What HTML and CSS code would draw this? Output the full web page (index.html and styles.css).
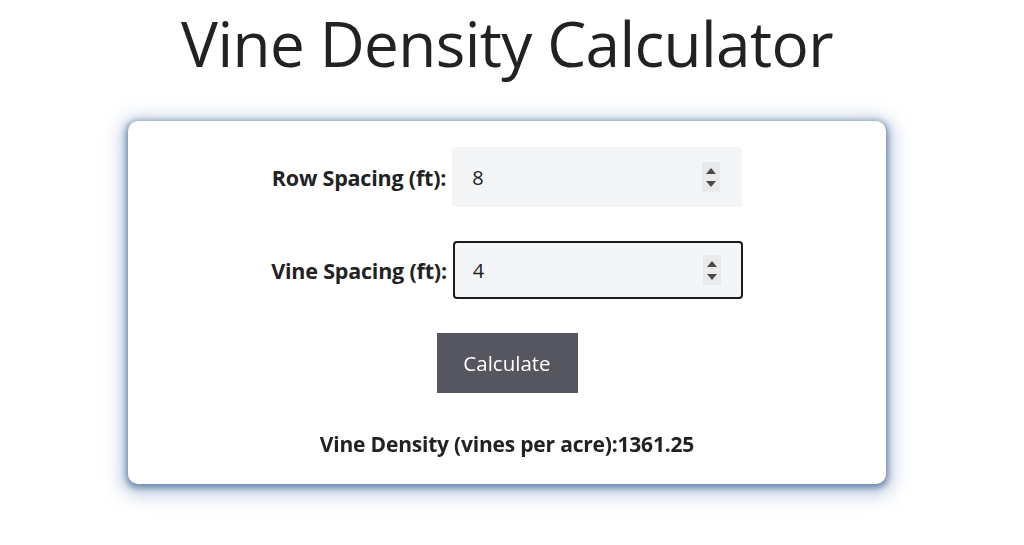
FILE: index.html
```html
<!DOCTYPE html>
<html lang="en">
<head>
    <meta charset="UTF-8">
    <meta name="viewport" content="width=device-width, initial-scale=1.0">
    <title>Vine Density Calculator</title>
    <link rel="stylesheet" href="styles.css">
</head>
<body>

    <h1 class="title">Vine Density Calculator</h1>

    <!-- Calculator card -->
    <div class="card">
        <div class="field">
            <label for="row-spacing">Row Spacing (ft):</label>
            <div class="num-box">
                <input type="number" id="row-spacing" value="8">
                <div class="spin"><span class="up"></span><span class="down"></span></div>
            </div>
        </div>

        <div class="field">
            <label for="vine-spacing">Vine Spacing (ft):</label>
            <div class="num-box active">
                <input type="number" id="vine-spacing" value="4" autofocus>
                <div class="spin"><span class="up"></span><span class="down"></span></div>
            </div>
        </div>

        <button class="btn" onclick="calculate()">Calculate</button>

        <div class="result">Vine Density (vines per acre):<span id="result">1361.25</span></div>
    </div>

    <script>
        function calculate() {
            var row = parseFloat(document.getElementById("row-spacing").value);
            var vine = parseFloat(document.getElementById("vine-spacing").value);
            if (!row || !vine) {
                document.getElementById("result").textContent = "";
                return;
            }
            document.getElementById("result").textContent = (43560 / (row * vine)).toFixed(2);
        }
    </script>

</body>
</html>
```

FILE: styles.css
```css
body {
    font-family: "Open Sans", "Noto Sans", Arial, sans-serif;
    background-color: #ffffff;
    color: #222;
    margin: 0;
    padding: 0 10px 50px 0;
}
.title {
    text-align: center;
    font-size: 62px;
    letter-spacing: -0.6px;
    font-weight: 400;
    margin: 0;
    line-height: 86px;
    color: #222;
}
/* Card */
.card {
    width: 758px;
    box-sizing: border-box;
    margin: 35px auto 0;
    padding: 26px 20px 26px;
    background: #fff;
    border-radius: 10px;
    box-shadow: 0 2px 6px 2px rgba(100, 130, 165, 0.9), 0 4px 18px 7px rgba(145, 172, 205, 0.55);
    display: flex;
    flex-direction: column;
    align-items: center;
}
.field {
    display: flex;
    align-items: center;
    gap: 6px;
    margin-bottom: 34px;
}
.field label {
    font-weight: 700;
    font-size: 21.5px;
    letter-spacing: -0.2px;
}
.num-box {
    width: 290px;
    height: 60px;
    box-sizing: border-box;
    background: #f4f5f7;
    border: 2px solid transparent;
    border-radius: 4px;
    display: flex;
    align-items: center;
    padding: 0 20px 0 18px;
}
.num-box.active {
    border-color: #1b1b1b;
    height: 58px;
}
.num-box input {
    flex: 1;
    min-width: 0;
    width: 0;
    border: none;
    background: transparent;
    font-family: inherit;
    font-size: 20px;
    color: #222;
    caret-color: #222;
    outline: none;
    padding: 0;
    -moz-appearance: textfield;
}
.num-box input::-webkit-inner-spin-button,
.num-box input::-webkit-outer-spin-button {
    -webkit-appearance: none;
    margin: 0;
}
.spin {
    flex-shrink: 0;
    width: 18px;
    height: 30px;
    background: #e9eaec;
    display: flex;
    flex-direction: column;
    align-items: center;
    justify-content: center;
    gap: 7px;
}
.spin .up {
    border-left: 5px solid transparent;
    border-right: 5px solid transparent;
    border-bottom: 6px solid #4a4a4a;
}
.spin .down {
    border-left: 5px solid transparent;
    border-right: 5px solid transparent;
    border-top: 6px solid #4a4a4a;
}
.btn {
    width: 141px;
    height: 60px;
    background: #565660;
    color: #fff;
    border: none;
    border-radius: 0;
    font-family: inherit;
    font-size: 20.5px;
    cursor: pointer;
}
.btn:hover {
    background: #45454e;
}
.result {
    margin-top: 37px;
    font-size: 21px;
    font-weight: 700;
    letter-spacing: -0.2px;
}
```
